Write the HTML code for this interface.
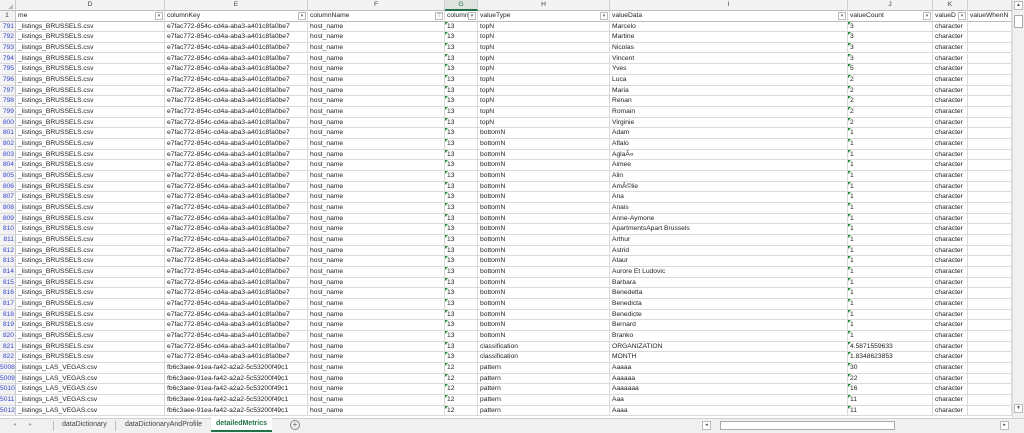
<!DOCTYPE html>
<html><head><meta charset="utf-8"><style>
*{margin:0;padding:0;box-sizing:border-box}
body{width:1024px;height:433px;overflow:hidden;background:#fff;font-family:"Liberation Sans",Arial,sans-serif;font-size:6.7px;color:#222;position:relative}
.r{position:absolute;left:0;width:1012px;display:flex;height:10.67px;line-height:10px}
.r>div{border-right:1px solid #dadada;border-bottom:1px solid #dadada;padding-left:2px;white-space:nowrap;overflow:hidden;position:relative;height:100%}
.c0{width:16px;text-align:right;padding-right:1px;padding-left:0!important;color:#3344cc;background:#f3f3f3;border-right:1px solid #c8c8c8!important}
.c1{width:149px}.c2{width:143px}.c3{width:137px}.c4{width:33px}.c5{width:132px}.c6{width:238px}.c7{width:85px}.c8{width:35px}.c9{width:44px}
.t::before{content:"";position:absolute;left:0;top:0;border-top:3px solid #1e8a3a;border-right:3px solid transparent}
.hd{top:0;height:10.5px;background:#f3f3f3}
.hd>div{text-align:center;color:#444;border-right:1px solid #d0d0d0;border-bottom:1px solid #bdbdbd;padding-left:0}
.hd .g{background:#dfe3df;color:#217346;border-bottom:2px solid #217346}
.h1{top:10.5px;height:11px}
.h1>div{border-bottom:1px solid #bdbdbd}
.dd{position:absolute;right:1px;top:1.5px;width:8px;height:8px;border:1px solid #bbb;background:#fff;font-size:5px;line-height:6px;text-align:center;color:#666}
#vs{position:absolute;left:1012px;top:0;width:12px;height:418px;background:#f0f0f0;border-left:1px solid #ddd}
#tb{position:absolute;left:0;top:418px;width:1024px;height:15px;background:#f0f0f0;border-top:1px solid #cfcfcf;font-size:7px;color:#444}
</style></head><body>
<div class="r hd"><div class="c0"><span style="position:absolute;right:2px;bottom:1px;border-bottom:5px solid #bbb;border-left:5px solid transparent"></span></div><div class="c1">D</div><div class="c2">E</div><div class="c3">F</div><div class="c4 g">G</div><div class="c5">H</div><div class="c6">I</div><div class="c7">J</div><div class="c8">K</div><div class="c9"></div></div>
<div class="r h1"><div class="c0" style="text-align:center;color:#444">1</div><div class="c1">me<span class="dd">▾</span></div><div class="c2">columnKey<span class="dd">▾</span></div><div class="c3">columnName<span class="dd">⊤</span></div><div class="c4">column<span class="dd">▾</span></div><div class="c5">valueType<span class="dd">▾</span></div><div class="c6">valueData<span class="dd">▾</span></div><div class="c7">valueCount<span class="dd">▾</span></div><div class="c8">valueD<span class="dd">▾</span></div><div class="c9">valueWhenN</div></div>
<div id="rows"></div>
<div class="r" style="top:21.5px"><div class="c0">791</div><div class="c1">_listings_BRUSSELS.csv</div><div class="c2">e7fac772-854c-cd4a-aba3-a401c8fa0be7</div><div class="c3">host_name</div><div class="c4 t">13</div><div class="c5">topN</div><div class="c6">Marcelo</div><div class="c7 t">3</div><div class="c8">character</div><div class="c9"></div></div>
<div class="r" style="top:32.17px"><div class="c0">792</div><div class="c1">_listings_BRUSSELS.csv</div><div class="c2">e7fac772-854c-cd4a-aba3-a401c8fa0be7</div><div class="c3">host_name</div><div class="c4 t">13</div><div class="c5">topN</div><div class="c6">Martine</div><div class="c7 t">3</div><div class="c8">character</div><div class="c9"></div></div>
<div class="r" style="top:42.84px"><div class="c0">793</div><div class="c1">_listings_BRUSSELS.csv</div><div class="c2">e7fac772-854c-cd4a-aba3-a401c8fa0be7</div><div class="c3">host_name</div><div class="c4 t">13</div><div class="c5">topN</div><div class="c6">Nicolas</div><div class="c7 t">3</div><div class="c8">character</div><div class="c9"></div></div>
<div class="r" style="top:53.51px"><div class="c0">794</div><div class="c1">_listings_BRUSSELS.csv</div><div class="c2">e7fac772-854c-cd4a-aba3-a401c8fa0be7</div><div class="c3">host_name</div><div class="c4 t">13</div><div class="c5">topN</div><div class="c6">Vincent</div><div class="c7 t">3</div><div class="c8">character</div><div class="c9"></div></div>
<div class="r" style="top:64.18px"><div class="c0">795</div><div class="c1">_listings_BRUSSELS.csv</div><div class="c2">e7fac772-854c-cd4a-aba3-a401c8fa0be7</div><div class="c3">host_name</div><div class="c4 t">13</div><div class="c5">topN</div><div class="c6">Yves</div><div class="c7 t">5</div><div class="c8">character</div><div class="c9"></div></div>
<div class="r" style="top:74.85px"><div class="c0">796</div><div class="c1">_listings_BRUSSELS.csv</div><div class="c2">e7fac772-854c-cd4a-aba3-a401c8fa0be7</div><div class="c3">host_name</div><div class="c4 t">13</div><div class="c5">topN</div><div class="c6">Luca</div><div class="c7 t">2</div><div class="c8">character</div><div class="c9"></div></div>
<div class="r" style="top:85.52px"><div class="c0">797</div><div class="c1">_listings_BRUSSELS.csv</div><div class="c2">e7fac772-854c-cd4a-aba3-a401c8fa0be7</div><div class="c3">host_name</div><div class="c4 t">13</div><div class="c5">topN</div><div class="c6">Maria</div><div class="c7 t">2</div><div class="c8">character</div><div class="c9"></div></div>
<div class="r" style="top:96.19px"><div class="c0">798</div><div class="c1">_listings_BRUSSELS.csv</div><div class="c2">e7fac772-854c-cd4a-aba3-a401c8fa0be7</div><div class="c3">host_name</div><div class="c4 t">13</div><div class="c5">topN</div><div class="c6">Renan</div><div class="c7 t">2</div><div class="c8">character</div><div class="c9"></div></div>
<div class="r" style="top:106.86px"><div class="c0">799</div><div class="c1">_listings_BRUSSELS.csv</div><div class="c2">e7fac772-854c-cd4a-aba3-a401c8fa0be7</div><div class="c3">host_name</div><div class="c4 t">13</div><div class="c5">topN</div><div class="c6">Romain</div><div class="c7 t">2</div><div class="c8">character</div><div class="c9"></div></div>
<div class="r" style="top:117.53px"><div class="c0">800</div><div class="c1">_listings_BRUSSELS.csv</div><div class="c2">e7fac772-854c-cd4a-aba3-a401c8fa0be7</div><div class="c3">host_name</div><div class="c4 t">13</div><div class="c5">topN</div><div class="c6">Virginie</div><div class="c7 t">2</div><div class="c8">character</div><div class="c9"></div></div>
<div class="r" style="top:128.2px"><div class="c0">801</div><div class="c1">_listings_BRUSSELS.csv</div><div class="c2">e7fac772-854c-cd4a-aba3-a401c8fa0be7</div><div class="c3">host_name</div><div class="c4 t">13</div><div class="c5">bottomN</div><div class="c6">Adam</div><div class="c7 t">1</div><div class="c8">character</div><div class="c9"></div></div>
<div class="r" style="top:138.87px"><div class="c0">802</div><div class="c1">_listings_BRUSSELS.csv</div><div class="c2">e7fac772-854c-cd4a-aba3-a401c8fa0be7</div><div class="c3">host_name</div><div class="c4 t">13</div><div class="c5">bottomN</div><div class="c6">Aflalo</div><div class="c7 t">1</div><div class="c8">character</div><div class="c9"></div></div>
<div class="r" style="top:149.54px"><div class="c0">803</div><div class="c1">_listings_BRUSSELS.csv</div><div class="c2">e7fac772-854c-cd4a-aba3-a401c8fa0be7</div><div class="c3">host_name</div><div class="c4 t">13</div><div class="c5">bottomN</div><div class="c6">AglaÃ«</div><div class="c7 t">1</div><div class="c8">character</div><div class="c9"></div></div>
<div class="r" style="top:160.21px"><div class="c0">804</div><div class="c1">_listings_BRUSSELS.csv</div><div class="c2">e7fac772-854c-cd4a-aba3-a401c8fa0be7</div><div class="c3">host_name</div><div class="c4 t">13</div><div class="c5">bottomN</div><div class="c6">Aimee</div><div class="c7 t">1</div><div class="c8">character</div><div class="c9"></div></div>
<div class="r" style="top:170.88px"><div class="c0">805</div><div class="c1">_listings_BRUSSELS.csv</div><div class="c2">e7fac772-854c-cd4a-aba3-a401c8fa0be7</div><div class="c3">host_name</div><div class="c4 t">13</div><div class="c5">bottomN</div><div class="c6">Alin</div><div class="c7 t">1</div><div class="c8">character</div><div class="c9"></div></div>
<div class="r" style="top:181.55px"><div class="c0">806</div><div class="c1">_listings_BRUSSELS.csv</div><div class="c2">e7fac772-854c-cd4a-aba3-a401c8fa0be7</div><div class="c3">host_name</div><div class="c4 t">13</div><div class="c5">bottomN</div><div class="c6">AmÃ©lie</div><div class="c7 t">1</div><div class="c8">character</div><div class="c9"></div></div>
<div class="r" style="top:192.22px"><div class="c0">807</div><div class="c1">_listings_BRUSSELS.csv</div><div class="c2">e7fac772-854c-cd4a-aba3-a401c8fa0be7</div><div class="c3">host_name</div><div class="c4 t">13</div><div class="c5">bottomN</div><div class="c6">Ana</div><div class="c7 t">1</div><div class="c8">character</div><div class="c9"></div></div>
<div class="r" style="top:202.89px"><div class="c0">808</div><div class="c1">_listings_BRUSSELS.csv</div><div class="c2">e7fac772-854c-cd4a-aba3-a401c8fa0be7</div><div class="c3">host_name</div><div class="c4 t">13</div><div class="c5">bottomN</div><div class="c6">Anais</div><div class="c7 t">1</div><div class="c8">character</div><div class="c9"></div></div>
<div class="r" style="top:213.56px"><div class="c0">809</div><div class="c1">_listings_BRUSSELS.csv</div><div class="c2">e7fac772-854c-cd4a-aba3-a401c8fa0be7</div><div class="c3">host_name</div><div class="c4 t">13</div><div class="c5">bottomN</div><div class="c6">Anne-Aymone</div><div class="c7 t">1</div><div class="c8">character</div><div class="c9"></div></div>
<div class="r" style="top:224.23px"><div class="c0">810</div><div class="c1">_listings_BRUSSELS.csv</div><div class="c2">e7fac772-854c-cd4a-aba3-a401c8fa0be7</div><div class="c3">host_name</div><div class="c4 t">13</div><div class="c5">bottomN</div><div class="c6">ApartmentsApart Brussels</div><div class="c7 t">1</div><div class="c8">character</div><div class="c9"></div></div>
<div class="r" style="top:234.9px"><div class="c0">811</div><div class="c1">_listings_BRUSSELS.csv</div><div class="c2">e7fac772-854c-cd4a-aba3-a401c8fa0be7</div><div class="c3">host_name</div><div class="c4 t">13</div><div class="c5">bottomN</div><div class="c6">Arthur</div><div class="c7 t">1</div><div class="c8">character</div><div class="c9"></div></div>
<div class="r" style="top:245.57px"><div class="c0">812</div><div class="c1">_listings_BRUSSELS.csv</div><div class="c2">e7fac772-854c-cd4a-aba3-a401c8fa0be7</div><div class="c3">host_name</div><div class="c4 t">13</div><div class="c5">bottomN</div><div class="c6">Astrid</div><div class="c7 t">1</div><div class="c8">character</div><div class="c9"></div></div>
<div class="r" style="top:256.24px"><div class="c0">813</div><div class="c1">_listings_BRUSSELS.csv</div><div class="c2">e7fac772-854c-cd4a-aba3-a401c8fa0be7</div><div class="c3">host_name</div><div class="c4 t">13</div><div class="c5">bottomN</div><div class="c6">Ataur</div><div class="c7 t">1</div><div class="c8">character</div><div class="c9"></div></div>
<div class="r" style="top:266.91px"><div class="c0">814</div><div class="c1">_listings_BRUSSELS.csv</div><div class="c2">e7fac772-854c-cd4a-aba3-a401c8fa0be7</div><div class="c3">host_name</div><div class="c4 t">13</div><div class="c5">bottomN</div><div class="c6">Aurore Et Ludovic</div><div class="c7 t">1</div><div class="c8">character</div><div class="c9"></div></div>
<div class="r" style="top:277.58px"><div class="c0">815</div><div class="c1">_listings_BRUSSELS.csv</div><div class="c2">e7fac772-854c-cd4a-aba3-a401c8fa0be7</div><div class="c3">host_name</div><div class="c4 t">13</div><div class="c5">bottomN</div><div class="c6">Barbara</div><div class="c7 t">1</div><div class="c8">character</div><div class="c9"></div></div>
<div class="r" style="top:288.25px"><div class="c0">816</div><div class="c1">_listings_BRUSSELS.csv</div><div class="c2">e7fac772-854c-cd4a-aba3-a401c8fa0be7</div><div class="c3">host_name</div><div class="c4 t">13</div><div class="c5">bottomN</div><div class="c6">Benedetta</div><div class="c7 t">1</div><div class="c8">character</div><div class="c9"></div></div>
<div class="r" style="top:298.92px"><div class="c0">817</div><div class="c1">_listings_BRUSSELS.csv</div><div class="c2">e7fac772-854c-cd4a-aba3-a401c8fa0be7</div><div class="c3">host_name</div><div class="c4 t">13</div><div class="c5">bottomN</div><div class="c6">Benedicta</div><div class="c7 t">1</div><div class="c8">character</div><div class="c9"></div></div>
<div class="r" style="top:309.59px"><div class="c0">818</div><div class="c1">_listings_BRUSSELS.csv</div><div class="c2">e7fac772-854c-cd4a-aba3-a401c8fa0be7</div><div class="c3">host_name</div><div class="c4 t">13</div><div class="c5">bottomN</div><div class="c6">Benedicte</div><div class="c7 t">1</div><div class="c8">character</div><div class="c9"></div></div>
<div class="r" style="top:320.26px"><div class="c0">819</div><div class="c1">_listings_BRUSSELS.csv</div><div class="c2">e7fac772-854c-cd4a-aba3-a401c8fa0be7</div><div class="c3">host_name</div><div class="c4 t">13</div><div class="c5">bottomN</div><div class="c6">Bernard</div><div class="c7 t">1</div><div class="c8">character</div><div class="c9"></div></div>
<div class="r" style="top:330.93px"><div class="c0">820</div><div class="c1">_listings_BRUSSELS.csv</div><div class="c2">e7fac772-854c-cd4a-aba3-a401c8fa0be7</div><div class="c3">host_name</div><div class="c4 t">13</div><div class="c5">bottomN</div><div class="c6">Branko</div><div class="c7 t">1</div><div class="c8">character</div><div class="c9"></div></div>
<div class="r" style="top:341.6px"><div class="c0">821</div><div class="c1">_listings_BRUSSELS.csv</div><div class="c2">e7fac772-854c-cd4a-aba3-a401c8fa0be7</div><div class="c3">host_name</div><div class="c4 t">13</div><div class="c5">classification</div><div class="c6">ORGANIZATION</div><div class="c7 t">4.5871559633</div><div class="c8">character</div><div class="c9"></div></div>
<div class="r" style="top:352.27px"><div class="c0">822</div><div class="c1">_listings_BRUSSELS.csv</div><div class="c2">e7fac772-854c-cd4a-aba3-a401c8fa0be7</div><div class="c3">host_name</div><div class="c4 t">13</div><div class="c5">classification</div><div class="c6">MONTH</div><div class="c7 t">1.8348623853</div><div class="c8">character</div><div class="c9"></div></div>
<div class="r" style="top:362.94px"><div class="c0">5008</div><div class="c1">_listings_LAS_VEGAS.csv</div><div class="c2">fb6c3aee-91ea-fa42-a2a2-5c53200f49c1</div><div class="c3">host_name</div><div class="c4 t">12</div><div class="c5">pattern</div><div class="c6">Aaaaa</div><div class="c7 t">30</div><div class="c8">character</div><div class="c9"></div></div>
<div class="r" style="top:373.61px"><div class="c0">5009</div><div class="c1">_listings_LAS_VEGAS.csv</div><div class="c2">fb6c3aee-91ea-fa42-a2a2-5c53200f49c1</div><div class="c3">host_name</div><div class="c4 t">12</div><div class="c5">pattern</div><div class="c6">Aaaaaa</div><div class="c7 t">22</div><div class="c8">character</div><div class="c9"></div></div>
<div class="r" style="top:384.28px"><div class="c0">5010</div><div class="c1">_listings_LAS_VEGAS.csv</div><div class="c2">fb6c3aee-91ea-fa42-a2a2-5c53200f49c1</div><div class="c3">host_name</div><div class="c4 t">12</div><div class="c5">pattern</div><div class="c6">Aaaaaaa</div><div class="c7 t">16</div><div class="c8">character</div><div class="c9"></div></div>
<div class="r" style="top:394.95px"><div class="c0">5011</div><div class="c1">_listings_LAS_VEGAS.csv</div><div class="c2">fb6c3aee-91ea-fa42-a2a2-5c53200f49c1</div><div class="c3">host_name</div><div class="c4 t">12</div><div class="c5">pattern</div><div class="c6">Aaa</div><div class="c7 t">11</div><div class="c8">character</div><div class="c9"></div></div>
<div class="r" style="top:405.62px"><div class="c0">5012</div><div class="c1">_listings_LAS_VEGAS.csv</div><div class="c2">fb6c3aee-91ea-fa42-a2a2-5c53200f49c1</div><div class="c3">host_name</div><div class="c4 t">12</div><div class="c5">pattern</div><div class="c6">Aaaa</div><div class="c7 t">11</div><div class="c8">character</div><div class="c9"></div></div>
<div id="vs">
<div style="position:absolute;left:1px;top:1px;width:9px;height:9px;background:#fff;border:1px solid #bbb;font-size:5px;line-height:7px;text-align:center;color:#555">▲</div>
<div style="position:absolute;left:1px;top:15px;width:9px;height:13px;background:#fff;border:1px solid #aaa"></div>
<div style="position:absolute;left:1px;top:404px;width:9px;height:9px;background:#fff;border:1px solid #bbb;font-size:5px;line-height:7px;text-align:center;color:#555">▼</div>
</div>
<div id="tb">
<span style="position:absolute;left:13px;top:2px;color:#aaa;font-size:6px">◂</span>
<span style="position:absolute;left:29px;top:2px;color:#aaa;font-size:6px">▸</span>
<span style="position:absolute;left:53px;top:2px;width:1px;height:10px;background:#bbb"></span>
<span style="position:absolute;left:62px;top:2px">dataDictionary</span>
<span style="position:absolute;left:115px;top:2px;width:1px;height:10px;background:#bbb"></span>
<span style="position:absolute;left:125px;top:2px">dataDictionaryAndProfile</span>
<div style="position:absolute;left:211px;top:-1px;width:61px;height:14px;background:#fff;border-bottom:2px solid #217346;color:#217346;font-weight:bold;text-align:center;line-height:12px">detailedMetrics</div>
<span style="position:absolute;left:290px;top:1px;width:10px;height:10px;border:1px solid #888;border-radius:50%;font-size:8px;line-height:8px;text-align:center;color:#666">+</span>
<div style="position:absolute;left:702px;top:2px;width:9px;height:9px;background:#fff;border:1px solid #bbb;font-size:5px;line-height:7px;text-align:center">◂</div>
<div style="position:absolute;left:720px;top:2px;width:175px;height:9px;background:#fff;border:1px solid #aaa"></div>
<div style="position:absolute;left:1000px;top:2px;width:9px;height:9px;background:#fff;border:1px solid #bbb;font-size:5px;line-height:7px;text-align:center">▸</div>
</div>
</body></html>
